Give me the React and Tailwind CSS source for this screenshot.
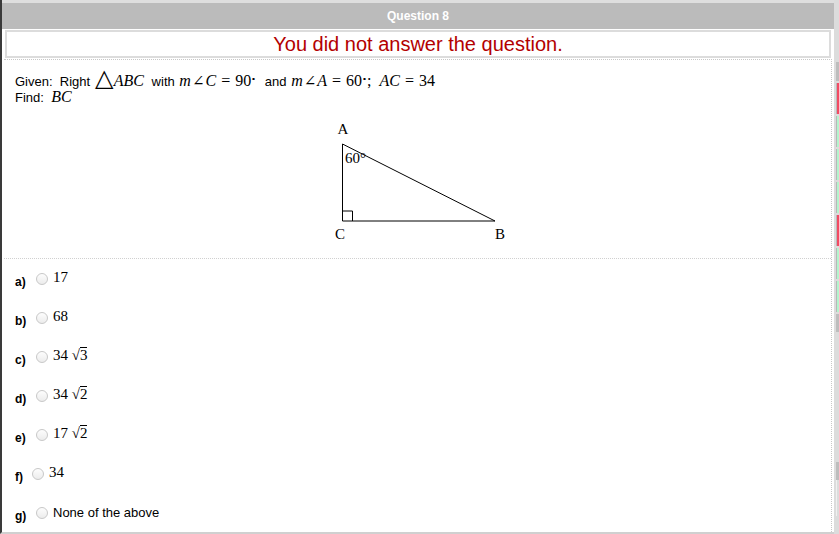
import React from "react";

const serif = { fontFamily: '"Liberation Serif", "Times New Roman", serif' };

function Sqrt({ n }) {
  return (
    <span className="inline-flex items-baseline">
      <span className="text-[15px]">√</span>
      <span className="border-t border-black leading-[14px]">{n}</span>
    </span>
  );
}

function Radio() {
  return (
    <span className="inline-block w-[12px] h-[12px] rounded-full border border-[#c8c8c8] bg-gradient-to-b from-[#fdfdfd] to-[#ececec] self-center shrink-0" />
  );
}

function Option({ label, children, sans }) {
  return (
    <div className="h-[39px] flex items-center pl-[11px]">
      <span className="font-bold text-[12px] text-black w-[21px] inline-block translate-y-[3px]">{label}</span>
      <Radio />
      <span
        className={sans ? "ml-[5px] text-[13px] text-black" : "ml-[5px] text-[15px] text-black -translate-y-[1px]"}
        style={sans ? undefined : serif}
      >
        {children}
      </span>
    </div>
  );
}

function M({ children, className = "" }) {
  return (
    <span className={"italic text-[16px] " + className} style={serif}>
      {children}
    </span>
  );
}

function Eq() {
  return <span className="mx-[5px]">=</span>;
}

function Angle() {
  return (
    <span className="inline-block mx-[1px]" style={{ fontFamily: '"DejaVu Serif", serif', fontSize: "15px" }}>
      ∠
    </span>
  );
}

export default function App() {
  return (
    <div
      className="w-[839px] h-[534px] overflow-hidden bg-white flex text-black"
      style={{ fontFamily: '"Liberation Sans", Arial, sans-serif' }}
    >
      <div className="flex-1 flex flex-col border-l-2 border-[#3a3a3a] border-b-2 border-b-[#d0d0d0]">
        <div className="h-[3px] bg-[#dedede]" />
        <div className="h-[27px] bg-[#bbbbbb] flex items-center justify-center text-white font-bold text-[12px] pt-[1px]">
          Question 8
        </div>
        <div className="mx-[3px] mt-[1px] h-[28px] border-2 border-[#dcdcdc] flex items-center justify-center text-[20px] text-[#b30000]">
          You did not answer the question.
        </div>
        <div className="flex-1 mx-[2px] mt-[1px] border-t border-r border-dotted border-[#c8c8c8] flex flex-col">
          <div className="border-b border-dotted border-[#d0d0d0] h-[199px] pt-[11px] pl-[11px]">
            <div className="text-[13px] leading-[14px] whitespace-nowrap">
              Given:&nbsp; Right{" "}
              <span
                className="text-[24px] leading-[14px] ml-[1px]"
                style={{ fontFamily: '"DejaVu Sans", sans-serif', fontWeight: 200 }}
              >
                △
              </span>
              <M className="ml-[1px] mr-[4px]">ABC</M> with{" "}
              <span className="text-[16px] ml-[1px] mr-[5px]" style={serif}>
                <i>m</i>
                <Angle />
                <i>C</i>
                <Eq />
                90<sup className="text-[8px]">∘</sup>
              </span>{" "}
              and{" "}
              <span className="text-[16px] ml-[1px]" style={serif}>
                <i>m</i>
                <Angle />
                <i>A</i>
                <Eq />
                60<sup className="text-[8px]">∘</sup>;&nbsp; <i>AC</i>
                <Eq />
                34
              </span>
            </div>
            <div className="text-[13px] leading-[14px] mt-[1px]">
              Find:&nbsp; <M>BC</M>
            </div>
            <div className="flex justify-center mt-[15px]">
              <svg width="180" height="122" viewBox="0 0 180 122" className="ml-[-6px]">
                <g fontFamily="Liberation Serif, Times New Roman, serif" fontSize="15" fill="#000">
                  <text x="13" y="14" textAnchor="middle">A</text>
                  <text x="10" y="119" textAnchor="middle">C</text>
                  <text x="170" y="119" textAnchor="middle">B</text>
                  <text x="15" y="43">60°</text>
                </g>
                <path d="M12.5 24 L12.5 101 L165 101 Z" fill="none" stroke="#000" strokeWidth="1" />
                <path d="M12.5 91 L22.5 91 L22.5 101" fill="none" stroke="#000" strokeWidth="1" />
              </svg>
            </div>
          </div>
          <div className="flex flex-col">
            <Option label="a)">17</Option>
            <Option label="b)">68</Option>
            <Option label="c)">
              34 <Sqrt n="3" />
            </Option>
            <Option label="d)">
              34 <Sqrt n="2" />
            </Option>
            <Option label="e)">
              17 <Sqrt n="2" />
            </Option>
            <div className="h-[39px] flex items-center pl-[11px]">
              <span className="font-bold text-[12px] w-[17px] inline-block translate-y-[3px]">f)</span>
              <Radio />
              <span className="ml-[5px] text-[15px] -translate-y-[1px]" style={serif}>34</span>
            </div>
            <Option label="g)" sans>
              None of the above
            </Option>
          </div>
        </div>
      </div>
      <div className="w-[5px] flex flex-col bg-[#dcdcdc] pl-[2px]">
        <div className="h-[62px]" />
        <div className="h-[19px] bg-[#bdbdbd]" />
        {["r", "g", "g", "g", "r", "g", "g"].map((c, i) => (
          <div
            key={i}
            className={
              c === "r"
                ? "h-[31px] mt-[2px] border-l border-[#b8b8b8] bg-[#f24a63]"
                : "h-[31px] mt-[2px] border-l border-[#b8b8b8] bg-[#b4f5cd]"
            }
          />
        ))}
        <div className="h-[18px] mt-[2px] bg-[#bdbdbd]" />
        <div className="h-[130px]" />
        <div className="h-[18px] bg-[#bdbdbd]" />
        <div className="h-[36px] border-l border-[#f0f0f0]" />
      </div>
    </div>
  );
}
